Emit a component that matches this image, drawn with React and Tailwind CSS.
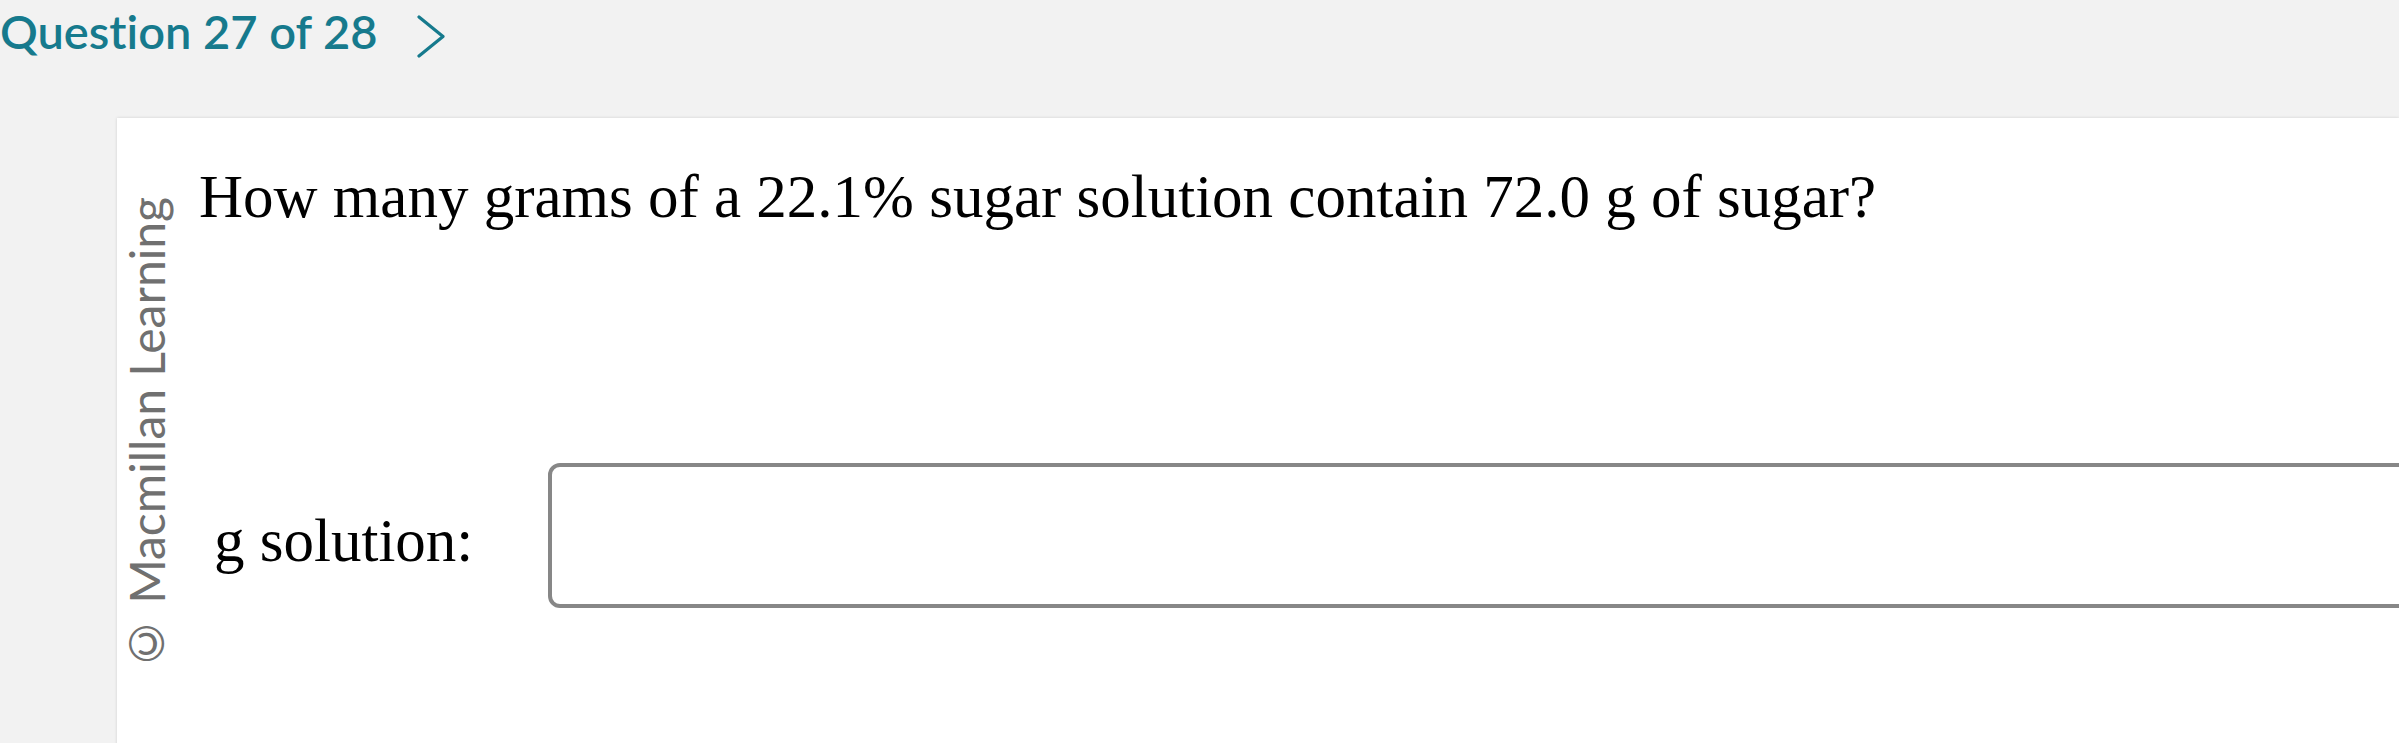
export default function App() {
  return (
    <div className="w-[2399px] h-[743px] overflow-hidden bg-[#f2f2f2]">
      {/* Top navigation: question counter and next arrow */}
      <header className="h-[118px] flex items-start pt-[8px]">
        <span className="font-['Lato',_sans-serif] font-semibold text-[47px] leading-none text-[#167a8d] [font-variant-ligatures:none]">
          Question 27 of 28
        </span>
        <svg
          className="ml-[38px] mt-[7px]"
          width="30"
          height="44"
          viewBox="0 0 30 44"
          fill="none"
          aria-hidden="true"
        >
          <polyline
            points="3,2 27,21.5 3,41"
            stroke="#167a8d"
            strokeWidth="3.2"
            strokeLinecap="round"
            strokeLinejoin="round"
          />
        </svg>
      </header>

      {/* Question card */}
      <section className="ml-[117px] h-[700px] bg-white shadow-[0_0_3px_rgba(0,0,0,0.14)] flex items-start">
        {/* Copyright strip, reading bottom to top */}
        <div className="pl-[6px] pt-[79px] w-[77px] shrink-0">
          <div className="[writing-mode:vertical-rl] rotate-180 font-['Lato',_sans-serif] text-[48px] leading-none text-[#707070] whitespace-nowrap [font-variant-ligatures:none]">
            © Macmillan Learning
          </div>
        </div>

        <div className="pt-[48px] pl-[5px] font-['Liberation_Serif',_serif] text-[61px] leading-none text-black">
          <p className="whitespace-nowrap">
            How many grams of a 22.1% sugar solution contain 72.0 g of sugar?
          </p>

          <div className="mt-[236px] pl-[15px] flex items-start">
            <label className="mt-[47px] whitespace-nowrap">g solution:</label>
            <div className="ml-[75px] w-[1900px] h-[145px] rounded-[12px] border-4 border-[#878787] bg-white" />
          </div>
        </div>
      </section>
    </div>
  );
}
